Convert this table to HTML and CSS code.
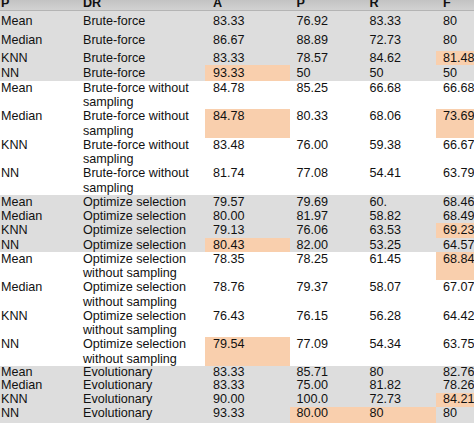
FILE: index.html
```html
<!DOCTYPE html>
<html>
<head>
<meta charset="utf-8">
<link rel="stylesheet" href="styles.css">
</head>
<body>
<table class="results">
  <colgroup>
    <col class="w1"><col class="w2"><col class="w3"><col class="w4"><col class="w5"><col class="w6">
  </colgroup>
  <thead>
    <tr><th>P</th><th>DR</th><th>A</th><th>P</th><th>R</th><th>F</th></tr>
  </thead>
  <tbody class="band">
    <tr class="r20"><td>Mean</td><td>Brute-force</td><td>83.33</td><td>76.92</td><td>83.33</td><td>80</td></tr>
    <tr class="r20"><td>Median</td><td>Brute-force</td><td>86.67</td><td>88.89</td><td>72.73</td><td>80</td></tr>
    <tr class="r14"><td>KNN</td><td>Brute-force</td><td>83.33</td><td>78.57</td><td>84.62</td><td class="hl">81.48</td></tr>
    <tr class="r16"><td>NN</td><td>Brute-force</td><td class="hl">93.33</td><td>50</td><td>50</td><td>50</td></tr>
  </tbody>
  <tbody class="plain">
    <tr><td>Mean</td><td>Brute-force without sampling</td><td>84.78</td><td>85.25</td><td>66.68</td><td>66.68</td></tr>
    <tr><td>Median</td><td>Brute-force without sampling</td><td class="hl">84.78</td><td>80.33</td><td>68.06</td><td class="hl">73.69</td></tr>
    <tr><td>KNN</td><td>Brute-force without sampling</td><td>83.48</td><td>76.00</td><td>59.38</td><td>66.67</td></tr>
    <tr><td>NN</td><td>Brute-force without sampling</td><td>81.74</td><td>77.08</td><td>54.41</td><td>63.79</td></tr>
  </tbody>
  <tbody class="band">
    <tr><td>Mean</td><td>Optimize selection</td><td>79.57</td><td>79.69</td><td>60.</td><td>68.46</td></tr>
    <tr><td>Median</td><td>Optimize selection</td><td>80.00</td><td>81.97</td><td>58.82</td><td>68.49</td></tr>
    <tr><td>KNN</td><td>Optimize selection</td><td>79.13</td><td>76.06</td><td>63.53</td><td class="hl">69.23</td></tr>
    <tr><td>NN</td><td>Optimize selection</td><td class="hl">80.43</td><td>82.00</td><td>53.25</td><td>64.57</td></tr>
  </tbody>
  <tbody class="plain">
    <tr><td>Mean</td><td>Optimize selection without sampling</td><td>78.35</td><td>78.25</td><td>61.45</td><td class="hl">68.84</td></tr>
    <tr><td>Median</td><td>Optimize selection without sampling</td><td>78.76</td><td>79.37</td><td>58.07</td><td>67.07</td></tr>
    <tr><td>KNN</td><td>Optimize selection without sampling</td><td>76.43</td><td>76.15</td><td>56.28</td><td>64.42</td></tr>
    <tr><td>NN</td><td>Optimize selection without sampling</td><td class="hl">79.54</td><td>77.09</td><td>54.34</td><td>63.75</td></tr>
  </tbody>
  <tbody class="band tight">
    <tr><td>Mean</td><td>Evolutionary</td><td>83.33</td><td>85.71</td><td>80</td><td>82.76</td></tr>
    <tr><td>Median</td><td>Evolutionary</td><td>83.33</td><td>75.00</td><td>81.82</td><td>78.26</td></tr>
    <tr><td>KNN</td><td>Evolutionary</td><td>90.00</td><td>100.0</td><td>72.73</td><td class="hl">84.21</td></tr>
    <tr class="last"><td>NN</td><td>Evolutionary</td><td>93.33</td><td class="hl">80.00</td><td class="hl">80</td><td>80</td></tr>
  </tbody>
</table>
</body>
</html>
```
FILE: styles.css
```css
html, body {
  margin: 0;
  padding: 0;
  background: #ffffff;
}
body {
  overflow: hidden;
  font-family: "Liberation Sans", Arial, sans-serif;
  font-size: 12.6px;
  color: #111111;
}
.results {
  border-collapse: collapse;
  border-spacing: 0;
  table-layout: fixed;
  width: 474px;
  margin-top: -4px;
}
.w1 { width: 76px; }
.w2 { width: 129px; }
.w3 { width: 85px; }
.w4 { width: 72px; }
.w5 { width: 74px; }
.w6 { width: 38px; }

.results th,
.results td {
  padding: 0;
  text-align: left;
  vertical-align: middle;
  line-height: 14.25px;
  white-space: nowrap;
}
.results td:nth-child(2) {
  white-space: normal;
}
.results th:nth-child(1), .results td:nth-child(1) { padding-left: 1px; }
.results th:nth-child(2), .results td:nth-child(2) { padding-left: 7px; padding-right: 7px; }
.results th:nth-child(3), .results td:nth-child(3) { padding-left: 8px; }
.results th:nth-child(4), .results td:nth-child(4) { padding-left: 6.5px; }
.results th:nth-child(5), .results td:nth-child(5) { padding-left: 7.5px; }
.results th:nth-child(6), .results td:nth-child(6) { padding-left: 7px; }

.results thead tr {
  height: 14px;
  background: linear-gradient(#bdbdbd, #d2d2d2);
  border-bottom: 1px solid #b4b4b4;
}
.results th {
  font-weight: bold;
  vertical-align: top;
  line-height: 14px;
}

.band tr { background: #dddddd; }
.plain tr { background: #ffffff; }
.plain td { vertical-align: top; }
.tight td { line-height: 13.6px; vertical-align: top; }
.tight tr.last { height: 18px; }

.r20 { height: 20px; }
.r14 { height: 14px; }
.r16 { height: 16px; }

.results td.hl { background: #f9cfad; }
```
